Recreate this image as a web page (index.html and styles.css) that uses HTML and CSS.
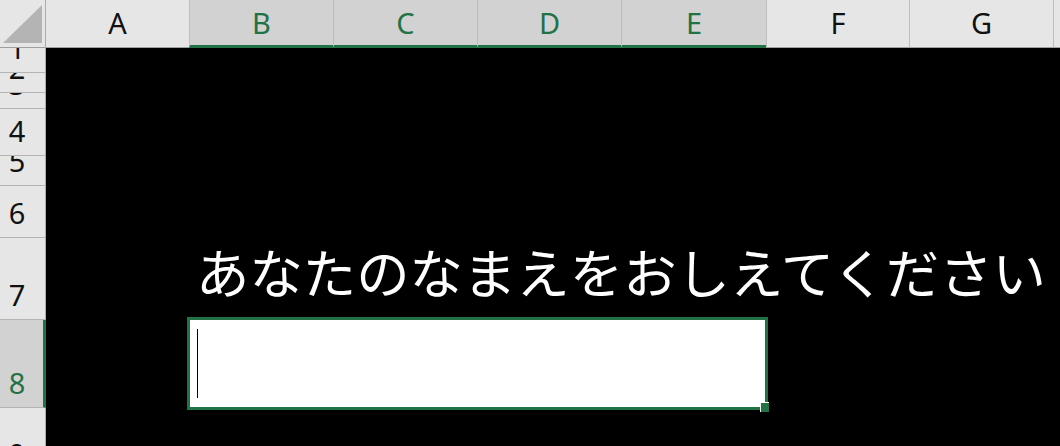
FILE: index.html
```html
<!DOCTYPE html>
<html lang="ja">
<head>
<meta charset="utf-8">
<title>Sheet</title>
<link rel="stylesheet" href="styles.css">
</head>
<body>
<div class="sheet">
  <div class="corner">
    <svg class="corner-tri" width="45" height="47" viewBox="0 0 45 47"><polygon points="42,5 42,43 3,43" fill="#b4b4b4"/></svg>
  </div>
  <div class="colheads">
    <div class="colhead w143 first">A</div>
    <div class="colhead w144 sel">B</div>
    <div class="colhead w144 sel">C</div>
    <div class="colhead w144 sel">D</div>
    <div class="colhead w145 sel">E</div>
    <div class="colhead w143">F</div>
    <div class="colhead w144">G</div>
    <div class="colhead rest"></div>
  </div>
  <div class="rowheads">
    <div class="rowhead h25"><span class="rlabel">1</span></div>
    <div class="rowhead h20"><span class="rlabel">2</span></div>
    <div class="rowhead h16"><span class="rlabel">3</span></div>
    <div class="rowhead h47"><span class="rlabel">4</span></div>
    <div class="rowhead h30"><span class="rlabel">5</span></div>
    <div class="rowhead h52"><span class="rlabel">6</span></div>
    <div class="rowhead h82"><span class="rlabel">7</span></div>
    <div class="rowhead h88 sel"><span class="rlabel">8</span></div>
    <div class="rowhead h71 last"><span class="rlabel">9</span></div>
  </div>
  <div class="grid">
    <div class="spacer"></div>
    <div class="prompt">あなたのなまえをおしえてください</div>
    <div class="editbox">
      <div class="caret"></div>
      <div class="fill-handle"></div>
    </div>
  </div>
</div>
</body>
</html>
```

FILE: styles.css
```css
html, body {
  margin: 0;
  padding: 0;
  background: #000;
  overflow: hidden;
}

.sheet {
  display: grid;
  grid-template-columns: 46px 1fr;
  grid-template-rows: 48px 1fr;
  width: 1060px;
  height: 446px;
  overflow: hidden;
  font-family: "Noto Sans", "Open Sans", sans-serif;
}

.corner {
  box-sizing: border-box;
  width: 46px;
  height: 48px;
  background: #e6e6e6;
  border-right: 1px solid #ababab;
  border-bottom: 1px solid #9f9f9f;
}

.corner-tri {
  display: block;
}

.colheads {
  display: flex;
  height: 48px;
  overflow: hidden;
}

.colhead {
  box-sizing: border-box;
  flex: none;
  height: 48px;
  background: #e6e6e6;
  border-left: 1px solid #bdbdbd;
  border-bottom: 1px solid #9f9f9f;
  color: #111;
  font-size: 29px;
  line-height: 29px;
  padding-top: 8px;
  text-align: center;
}

.colhead.first {
  border-left: none;
}

.colhead.sel {
  background: #d2d2d2;
  color: #217346;
  border-bottom: 3px solid #217346;
}

.w143 { width: 143px; }
.w144 { width: 144px; }
.w145 { width: 145px; }
.rest { flex: 1; }

.rowheads {
  display: flex;
  flex-direction: column;
  overflow: hidden;
}

.rowhead {
  box-sizing: border-box;
  flex: none;
  width: 46px;
  background: #e6e6e6;
  border-right: 1px solid #ababab;
  border-bottom: 1px solid #b4b4b4;
  display: flex;
  flex-direction: column;
  justify-content: flex-end;
  align-items: center;
  padding-right: 11px;
  padding-bottom: 10px;
  overflow: hidden;
  color: #111;
  font-size: 29px;
  line-height: 29px;
}

.rowhead.sel {
  background: #d2d2d2;
  color: #217346;
  border-right: 3px solid #217346;
  padding-right: 9px;
}

.rlabel {
  display: block;
  flex: none;
}

.h16 { height: 16px; }
.h20 { height: 20px; }
.h25 { height: 25px; }
.h30 { height: 30px; }
.h47 { height: 47px; }
.h52 { height: 52px; }
.h71 { height: 71px; }
.h82 { height: 82px; }
.h88 { height: 88px; }

.grid {
  background: #000;
  display: flex;
  flex-direction: column;
  overflow: hidden;
}

.spacer {
  flex: none;
  height: 190px;
}

.prompt {
  box-sizing: border-box;
  flex: none;
  height: 79px;
  padding-top: 6px;
  padding-left: 150px;
  color: #fff;
  font-family: "Noto Sans CJK JP", "Noto Sans", sans-serif;
  font-size: 53.4px;
  line-height: 53px;
  white-space: nowrap;
}

.editbox {
  box-sizing: border-box;
  position: relative;
  flex: none;
  margin-left: 141px;
  width: 581px;
  height: 93px;
  background: #fff;
  border: 3px solid #217346;
}

.caret {
  width: 1px;
  height: 69px;
  margin-left: 7px;
  margin-top: 9px;
  background: #000;
}

.fill-handle {
  position: absolute;
  box-sizing: border-box;
  left: 570px;
  top: 82px;
  width: 9px;
  height: 10px;
  background: #217346;
  border-left: 1px solid #fff;
  border-top: 1px solid #fff;
}
```
